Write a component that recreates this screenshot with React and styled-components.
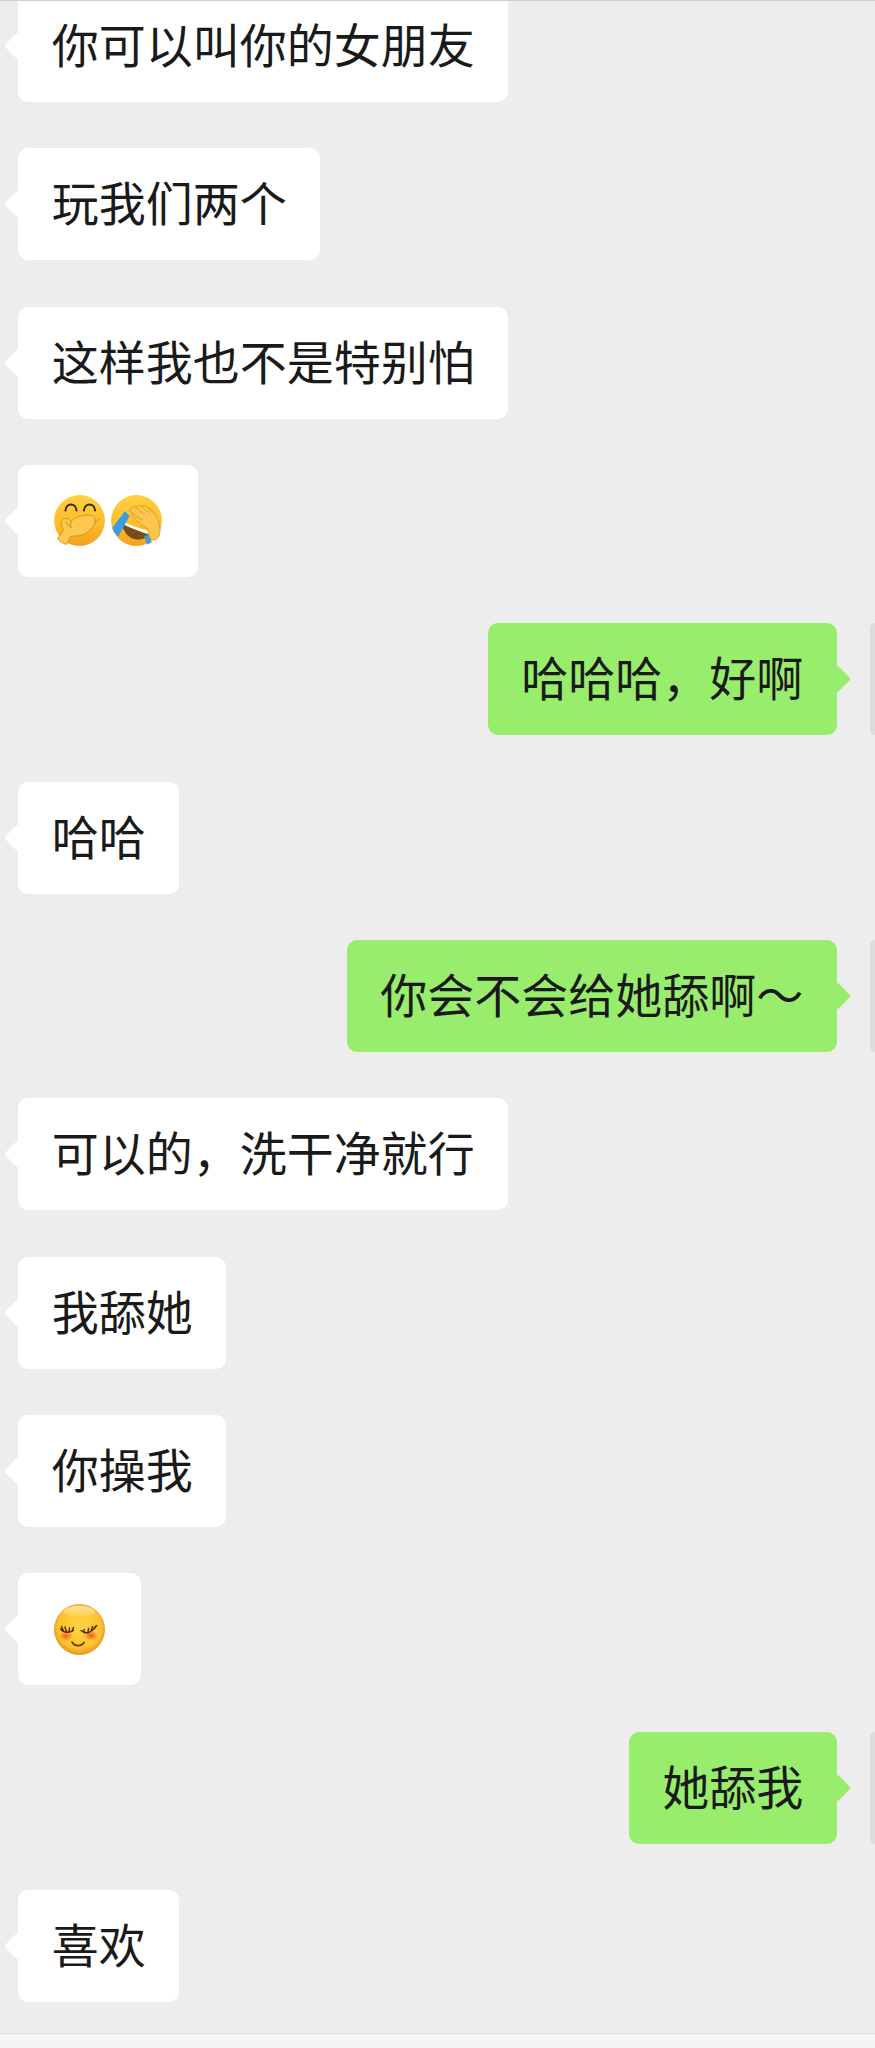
import React from "react";
import styled, { createGlobalStyle } from "styled-components";

const GlobalStyle = createGlobalStyle`
  html, body { margin: 0; padding: 0; background: #ededed; }
  body { font-family: "Noto Sans CJK SC", "Noto Sans", sans-serif; }
`;

const Screen = styled.div`
  width: 875px;
  height: 2048px;
  display: flex;
  flex-direction: column;
  overflow: hidden;
  background: #ededed;
`;

const TitleEdge = styled.div`
  flex: none;
  height: 1px;
  background: #cfcfcf;
  position: relative;
  z-index: 1;
`;

const Chat = styled.div`
  flex: 1;
  min-height: 0;
  margin-top: -11px;
  display: flex;
  flex-direction: column;
  gap: 46.33px;
`;

const Row = styled.div`
  display: flex;
  align-items: stretch;
  justify-content: ${(p) => (p.$mine ? "flex-end" : "flex-start")};
  padding-left: 18px;
  gap: 33px;
`;

const Bubble = styled.div`
  position: relative;
  box-sizing: border-box;
  height: 112px;
  padding: 0 33.7px 7px;
  display: flex;
  align-items: center;
  gap: 6px;
  border-radius: 10px;
  font-size: 47px;
  line-height: 1;
  color: #1a1a1a;
  white-space: nowrap;
  background: ${(p) => (p.$mine ? "#99ed6c" : "#ffffff")};

  &::before {
    content: "";
    position: absolute;
    top: 46px;
    ${(p) => (p.$mine ? "right: -10px;" : "left: -10px;")}
    width: 20px;
    height: 20px;
    border-radius: 3px;
    background: inherit;
    transform: rotate(45deg);
  }
`;

const EmojiBubble = styled(Bubble)`
  padding: 0 36px;
`;

const Avatar = styled.div`
  flex: none;
  width: 5px;
  border-radius: 6px 0 0 6px;
  background: #dcdcdc;
`;

const Footer = styled.div`
  flex: none;
  height: 14px;
  border-top: 1px solid #dedede;
  background: #f6f4f4;
`;

const EmojiSvg = styled.svg`
  display: block;
  flex: none;
  width: 51px;
  height: 51px;
`;

function FaceDefs({ id }) {
  return (
    <defs>
      <linearGradient id={id} x1="0" y1="0" x2="0" y2="1">
        <stop offset="0%" stopColor="#ffd040" />
        <stop offset="55%" stopColor="#fdbe2e" />
        <stop offset="100%" stopColor="#f5a01c" />
      </linearGradient>
    </defs>
  );
}

function GiggleFace() {
  return (
    <EmojiSvg viewBox="0 0 51 51" aria-label="偷笑">
      <FaceDefs id="giggle" />
      <circle cx="25.5" cy="25.5" r="25.4" fill="url(#giggle)" />
      <path d="M11.5 15.5c.4-8 10.6-8 11 0" fill="none" stroke="#3a2410" strokeWidth="1.9" strokeLinecap="round" />
      <path d="M30 15.5c.4-8 10.6-8 11 0" fill="none" stroke="#3a2410" strokeWidth="1.9" strokeLinecap="round" />
      <path
        d="M3.5 44c2-3.500 4.500-6 5.800-9.500 -1.300-2.500-2.300-5-1.800-7.500 .6-2.500 2.600-3.500 4.600-3.500 1.900 0 3.600 1.200 5 3.200 2.200-2.800 5.500-5 9-5.600 3-.5 6.500-1.300 9-1 3.500.2 6 1.800 6.200 4.500 .2 2.500-.6 5-2.200 7 -2.500 3-5.800 6.500-10 8.200 -3.800 1.500-8.500 1.200-12.200 1.400 -1.400 2.500-2.700 5.500-4.400 8.200 -3.600-.8-6.800-2.600-9-5.900z"
        fill="#fcc94e"
        stroke="#d08f20"
        strokeWidth=".9"
        strokeLinejoin="round"
      />
      <path d="M12 27c1.500 2.600 3.200 4.400 5.600 5.300M17 26.700c-.5 1.200-.6 2.300-.4 3.500" fill="none" stroke="#c98a1e" strokeWidth="1" strokeLinecap="round" />
      <path d="M40.500 27c1.500-.4 3-1.500 4.200-3" fill="none" stroke="#c98a1e" strokeWidth="1" strokeLinecap="round" />
    </EmojiSvg>
  );
}

function FacepalmFace() {
  return (
    <EmojiSvg viewBox="0 0 51 51" aria-label="捂脸">
      <FaceDefs id="palm" />
      <circle cx="25.5" cy="25.5" r="25.4" fill="url(#palm)" />
      <path d="M10.500 28c7 4 17 8 27 11.500 -3 4.500-8 5.800-13.500 4.800C17 43 12 36 10.500 28z" fill="#7a4a1c" />
      <path d="M12 26.500c7 3 16 7 25 9l1 3.500C29 36.500 20 33 11.500 29z" fill="#ffffff" />
      <path d="M14 16 18.500 21 7.500 41.500C4.500 39.500 2 36 1.200 33z" fill="#3d9be0" />
      <path d="M33 41 38.500 40 40.500 47.500 36 49.500z" fill="#3d9be0" />
      <path
        d="M18.500 15c2-2.800 4.500-3.500 6.500-3 1.500-1.500 4-1.500 5.500-.8 2-1 4.500-.3 6 1.300 3.500.8 6 3.500 7.500 6.500 2.500 4.500 4.500 9.500 5 14.500 .4 3.500-.5 8-3 10.500 -2 1.500-5 1.500-6.500-.5 -2-3-1.500-7-3.500-10.500 -3-1.500-5.500-3-8-5.500 -3.500-3-7-6.500-9.500-12.500z"
        fill="#fbc54e"
        stroke="#dc9526"
        strokeWidth=".8"
        strokeLinejoin="round"
      />
      <path d="M25 12c2 2.500 5 5 8 7M30.500 11.200c2.500 2.500 5 4.500 8 6.500M36.500 12.500c2 2 3.500 3.500 5.500 5.500M21.500 18c3 2.500 6.500 5 9.500 6.500" fill="none" stroke="#dc9526" strokeWidth=".9" strokeLinecap="round" />
    </EmojiSvg>
  );
}

function BlushFace() {
  return (
    <EmojiSvg viewBox="0 0 51 51" aria-label="害羞">
      <defs>
        <radialGradient id="blushFace" cx="50%" cy="45%" r="55%">
          <stop offset="0%" stopColor="#ffd445" />
          <stop offset="78%" stopColor="#fdc22e" />
          <stop offset="100%" stopColor="#e8951f" />
        </radialGradient>
        <radialGradient id="cheek">
          <stop offset="0%" stopColor="#f04e22" stopOpacity=".9" />
          <stop offset="100%" stopColor="#f04e22" stopOpacity="0" />
        </radialGradient>
        <linearGradient id="sheen" x1="0" y1="0" x2="0" y2="1">
          <stop offset="0%" stopColor="#fff6cf" stopOpacity=".7" />
          <stop offset="100%" stopColor="#fff6cf" stopOpacity="0" />
        </linearGradient>
      </defs>
      <circle cx="25.5" cy="25.5" r="25.1" fill="url(#blushFace)" stroke="#d98a20" strokeWidth=".6" />
      <ellipse cx="25.5" cy="8" rx="16" ry="6" fill="url(#sheen)" />
      <ellipse cx="12" cy="32" rx="7" ry="5" fill="url(#cheek)" />
      <ellipse cx="37" cy="31.5" rx="7" ry="5" fill="url(#cheek)" />
      <path d="M6.500 25c3 3.800 8.500 4.300 13 1.500M7.500 22.500l2 4.500M11 23l1.500 5M15.500 24l-.5 4M19.500 23.500l-1.500 3.500" fill="none" stroke="#4a2a0e" strokeWidth="1.400" strokeLinecap="round" />
      <path d="M27 26.500c4.500 4 10.500 2.500 14-3.500M42.500 21.500l-2.500 3.500M38.500 22.500l-1.500 4.500M34.500 24.500l-.6 4.500M30 25.500l.4 3.500" fill="none" stroke="#4a2a0e" strokeWidth="1.400" strokeLinecap="round" />
      <path d="M18 38c2.500 4.500 9.500 4.800 12 .5" fill="none" stroke="#6e3e10" strokeWidth="1.700" strokeLinecap="round" />
    </EmojiSvg>
  );
}

const messages = [
  { text: "你可以叫你的女朋友" },
  { text: "玩我们两个" },
  { text: "这样我也不是特别怕" },
  { emoji: [GiggleFace, FacepalmFace] },
  { text: "哈哈哈，好啊", mine: true },
  { text: "哈哈" },
  { text: "你会不会给她舔啊～", mine: true },
  { text: "可以的，洗干净就行" },
  { text: "我舔她" },
  { text: "你操我" },
  { emoji: [BlushFace] },
  { text: "她舔我", mine: true },
  { text: "喜欢" },
];

export default function App() {
  return (
    <Screen lang="zh-CN">
      <GlobalStyle />
      <TitleEdge />
      <Chat>
        {messages.map((m, i) => (
          <Row key={i} $mine={m.mine}>
            {m.emoji ? (
              <EmojiBubble>
                {m.emoji.map((Face, j) => (
                  <Face key={j} />
                ))}
              </EmojiBubble>
            ) : (
              <Bubble $mine={m.mine}>{m.text}</Bubble>
            )}
            {m.mine && <Avatar />}
          </Row>
        ))}
      </Chat>
      <Footer />
    </Screen>
  );
}
